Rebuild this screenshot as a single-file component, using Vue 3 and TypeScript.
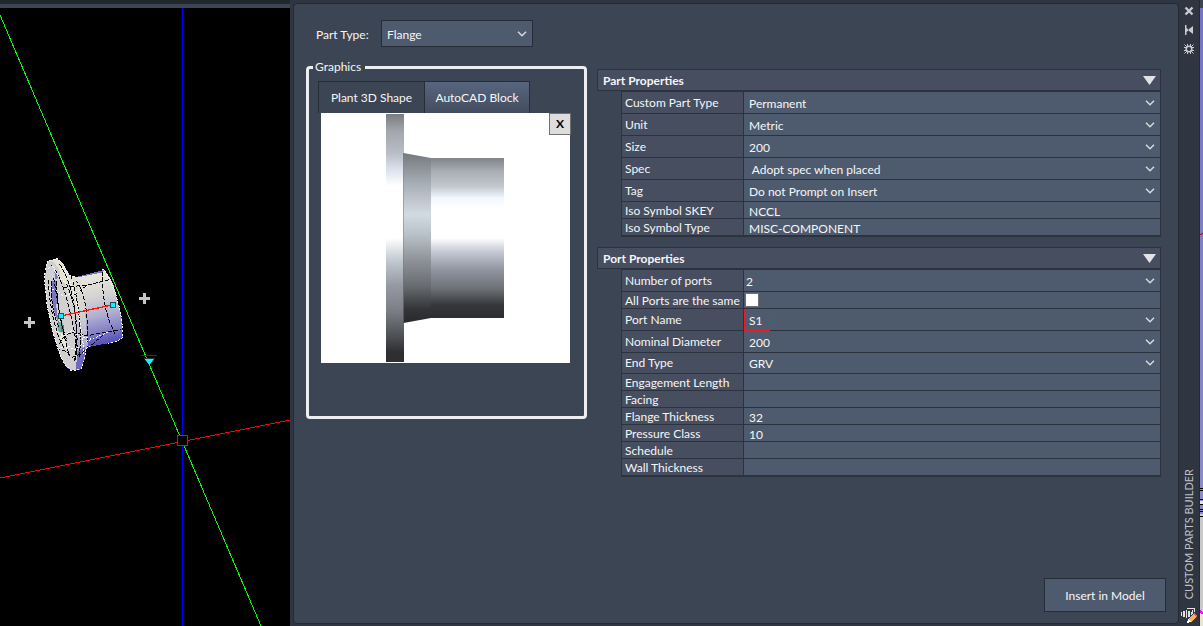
<script setup lang="ts">
import { reactive, ref } from 'vue'

type Kind = 'select' | 'text' | 'check'

interface Property {
  id: string
  label: string
  kind: Kind
  value: string
  size?: 'mid' | 'small'
  tight?: boolean
  marked?: boolean
}

interface Section {
  title: string
  open: boolean
  rows: Property[]
}

const sections = reactive<Section[]>([
  {
    title: 'Part Properties',
    open: true,
    rows: [
      { id: 'custom-type', label: 'Custom Part Type', kind: 'select', value: 'Permanent' },
      { id: 'unit', label: 'Unit', kind: 'select', value: 'Metric' },
      { id: 'size', label: 'Size', kind: 'select', value: '200' },
      { id: 'spec', label: 'Spec', kind: 'select', value: '\u00a0Adopt spec when placed' },
      { id: 'tag', label: 'Tag', kind: 'select', value: 'Do not Prompt on Insert' },
      { id: 'skey', label: 'Iso Symbol SKEY', kind: 'text', value: 'NCCL', size: 'small' },
      { id: 'iso-type', label: 'Iso Symbol Type', kind: 'text', value: 'MISC-COMPONENT', size: 'small' },
    ],
  },
  {
    title: 'Port Properties',
    open: true,
    rows: [
      { id: 'ports', label: 'Number of ports', kind: 'select', value: '2', tight: true },
      { id: 'same', label: 'All Ports are the same', kind: 'check', value: '', size: 'small' },
      { id: 'port-name', label: 'Port Name', kind: 'select', value: 'S1', marked: true },
      { id: 'diameter', label: 'Nominal Diameter', kind: 'select', value: '200' },
      { id: 'end-type', label: 'End Type', kind: 'select', value: 'GRV', size: 'mid' },
      { id: 'engagement', label: 'Engagement Length', kind: 'text', value: '', size: 'small' },
      { id: 'facing', label: 'Facing', kind: 'text', value: '', size: 'small' },
      { id: 'thickness', label: 'Flange Thickness', kind: 'text', value: '32', size: 'small' },
      { id: 'pressure', label: 'Pressure Class', kind: 'text', value: '10', size: 'small' },
      { id: 'schedule', label: 'Schedule', kind: 'text', value: '', size: 'small' },
      { id: 'wall', label: 'Wall Thickness', kind: 'text', value: '', size: 'small' },
    ],
  },
])

const tabs = ['Plant 3D Shape', 'AutoCAD Block']
const activeTab = ref('AutoCAD Block')
const partType = ref('Flange')
const allSame = ref(false)
</script>

<template>
  <div class="app">
    <section class="viewport" aria-label="Model view">
      <svg class="scene" viewBox="0 8 290 618" preserveAspectRatio="xMinYMin slice">
        <defs>
          <linearGradient id="body" x1="0" y1="0" x2="0.15" y2="1">
            <stop offset="0" stop-color="#dedfdb" />
            <stop offset="0.1" stop-color="#e9e8da" />
            <stop offset="0.4" stop-color="#d5d4d2" />
            <stop offset="0.65" stop-color="#b0afd0" />
            <stop offset="0.85" stop-color="#8582c6" />
            <stop offset="1" stop-color="#5a55c0" />
          </linearGradient>
          <linearGradient id="rim" x1="0" y1="0" x2="0" y2="1">
            <stop offset="0" stop-color="#e6e5d4" />
            <stop offset="0.5" stop-color="#d2d2d2" />
            <stop offset="0.8" stop-color="#a9a8cd" />
            <stop offset="1" stop-color="#615dbb" />
          </linearGradient>
        </defs>
        <line x1="182.500" y1="8" x2="182.500" y2="626" stroke="#0000ff" />
        <g transform="translate(35 250) scale(0.333333)" shape-rendering="crispEdges">
          <path d="M122 81L208 60L218 72L236 105L248 155L260 205L263 262L250 274L160 291L120 250Z" fill="url(#body)" />
          <path d="M126 80L206 60L204 67L140 80Z" fill="#7773c4" />
          <path d="M38 32L68 27L84 40L104 76L122 80L140 92L150 150L152 215L160 285L151 300L150 320L138 358L108 362L94 350L74 314L52 240L36 165L30 90Z" fill="url(#rim)" />
          <path d="M32 60L38 32L55 34L72 58L90 105L106 170L120 245L127 320L124 358L108 362L92 348L74 314L52 240L36 165L30 105Z" fill="#d0d0d0" />
          <path d="M128 305L151 290L150 325L138 357L122 360Z" fill="#6c69bf" />
          <path d="M50 94L63 94L66 140L64 172L72 222L60 195L51 145Z" fill="#7976be" />
          <path d="M58 65L65 66L70 82L62 90Z" fill="#7976be" />
          <path d="M78 245L92 268L103 314L94 300L76 265Z" fill="#e8e6cf" />
          <path d="M76 48L88 55L98 85L94 108L76 80Z" fill="#e8e6cf" />
          <ellipse cx="77" cy="231" rx="10" ry="15" fill="#64ad9f" />
          <path d="M78 222L88 226L86 244L79 246Z" fill="#308d8c" />
          <g fill="none" stroke="#000" stroke-width="3" stroke-dasharray="13 5">
            <path d="M40 90C42 160 60 250 90 300" />
            <path d="M48 46C70 62 90 120 108 198S126 305 118 334" />
            <path d="M56 84C66 142 75 216 103 319" />
            <path d="M50 94C47 145 54 200 72 230M63 94L70 168L82 232L96 272" />
            <path d="M73 42C98 75 117 137 122 208S130 322 116 337" />
            <path d="M94 100C117 152 130 216 125 302" />
            <path d="M108 76C128 142 142 230 133 322" />
            <path d="M122 90C148 120 160 190 158 278" />
            <path d="M204 65C199 112 208 174 225 218L240 252" />
            <path d="M86 112L157 105L246 84M116 136L157 105" />
            <path d="M74 282C90 240 122 245 150 258L258 239" />
            <path d="M63 295L92 304L112 322L138 312L169 285L211 250" />
          </g>
          <g fill="none" stroke="#fff" stroke-width="3" stroke-dasharray="6 5">
            <path d="M32 60L38 32L68 26L85 44L101 76L122 80" />
            <path d="M30 68L30 105L36 165L52 240L74 314L92 348L108 362L138 358L150 322L151 296L165 290" />
            <path d="M201 60L210 60L222 84L242 132L256 183L263 238L262 263L249 273L218 280" />
            <path d="M40 55L53 50L67 76L94 101L127 91" />
            <path d="M30 115L61 118L83 137L116 133L156 110" />
            <path d="M60 242L86 259L110 242L135 260L169 265" />
            <path d="M69 299L95 286L119 300L150 276L225 244" />
            <path d="M85 52L112 113L129 181L143 267L146 313" />
          </g>
          <path d="M78 198L235 164" stroke="#ff1010" stroke-width="4" />
          <g fill="#00f5ff" stroke="#244c50" stroke-width="3">
            <rect x="71" y="191" width="15" height="15" />
            <rect x="227" y="157" width="15" height="15" />
          </g>
        </g>
        <path d="M0 15L261 626" stroke="#00ff00" fill="none" shape-rendering="crispEdges" />
        <path d="M0 478L290 420" stroke="#ff0000" fill="none" shape-rendering="crispEdges" />
        <path
          d="M28 317h3v4h4v3h-4v4h-3v-4h-4v-3h4zM143 293h3v4h4v3h-4v4h-3v-4h-4v-3h4z"
          fill="#c6c6c6"
        />
        <path d="M141 355.500h16M144 358.500h11" stroke="#333" />
        <path d="M144.500 359h9.500l-4.500 6z" fill="#00ffff" />
        <rect x="177.500" y="435.500" width="10" height="10" fill="#000" stroke="#ff0000" />
      </svg>
    </section>

    <main class="palette">
      <div class="sheet">
        <div class="type-line">
          <label for="part-type">Part Type:</label>
          <span class="pick type-pick">
            <select id="part-type" v-model="partType">
              <option>Flange</option>
            </select>
            <svg class="chevron" viewBox="0 0 10 6"><path d="M1 0.800L5 4.800L9 0.800" /></svg>
          </span>
        </div>

        <div class="columns">
          <fieldset class="graphics">
            <legend>Graphics</legend>
            <div class="tabs" role="tablist">
              <button
                v-for="tab in tabs"
                :key="tab"
                type="button"
                role="tab"
                class="tab"
                :class="{ active: tab === activeTab }"
                :aria-selected="tab === activeTab"
                @click="activeTab = tab"
              >{{ tab }}</button>
            </div>
            <div class="preview">
              <svg class="drawing" viewBox="0 0 250 250" preserveAspectRatio="xMinYMin slice" role="img" aria-label="Flange">
                <defs>
                  <linearGradient id="plate" x1="0" y1="0" x2="0" y2="1">
                    <stop offset="0" stop-color="#797c81" />
                    <stop offset="0.070" stop-color="#a3a7ac" />
                    <stop offset="0.160" stop-color="#b9bec7" />
                    <stop offset="0.230" stop-color="#e0e4ef" />
                    <stop offset="0.290" stop-color="#ffffff" />
                    <stop offset="0.500" stop-color="#ffffff" />
                    <stop offset="0.590" stop-color="#c2c9d1" />
                    <stop offset="0.690" stop-color="#9699a2" />
                    <stop offset="0.790" stop-color="#7c8086" />
                    <stop offset="0.900" stop-color="#4c4e51" />
                    <stop offset="0.960" stop-color="#2e2f32" />
                    <stop offset="1" stop-color="#2e2f32" />
                  </linearGradient>
                  <linearGradient id="pipe" x1="0" y1="0" x2="0" y2="1">
                    <stop offset="0" stop-color="#818488" />
                    <stop offset="0.080" stop-color="#a8acb3" />
                    <stop offset="0.180" stop-color="#c3c8d0" />
                    <stop offset="0.250" stop-color="#f0f8fe" />
                    <stop offset="0.320" stop-color="#ffffff" />
                    <stop offset="0.500" stop-color="#ffffff" />
                    <stop offset="0.580" stop-color="#c8ccd6" />
                    <stop offset="0.700" stop-color="#9094a0" />
                    <stop offset="0.820" stop-color="#6c6f74" />
                    <stop offset="0.920" stop-color="#35373a" />
                    <stop offset="1" stop-color="#2c2d31" />
                  </linearGradient>
                  <linearGradient id="neck" x1="0" y1="0" x2="0" y2="1">
                    <stop offset="0" stop-color="#74797e" />
                    <stop offset="0.160" stop-color="#a2a8af" />
                    <stop offset="0.360" stop-color="#d3dbe2" />
                    <stop offset="0.480" stop-color="#b9c1c8" />
                    <stop offset="0.640" stop-color="#8c9096" />
                    <stop offset="0.780" stop-color="#696c70" />
                    <stop offset="0.920" stop-color="#323437" />
                    <stop offset="1" stop-color="#29292e" />
                  </linearGradient>
                </defs>
                <rect x="65" y="1" width="18" height="248" fill="url(#plate)" />
                <path d="M110 45H183V205H110Z" fill="url(#pipe)" />
                <path d="M82.500 40L110 45V205L82.500 210Z" fill="url(#neck)" />
                <path d="M82.500 40V210" stroke="#5b5e62" stroke-opacity="0.500" />
              </svg>
              <button type="button" class="clear">X</button>
            </div>
          </fieldset>

          <div class="properties">
            <section v-for="section in sections" :key="section.title" class="section">
              <button
                type="button"
                class="section-head"
                :aria-expanded="section.open"
                @click="section.open = !section.open"
              >
                <span>{{ section.title }}</span>
                <svg class="arrow" viewBox="0 0 13 9"><path d="M0 0H13L6.500 9Z" /></svg>
              </button>
              <table v-if="section.open" class="grid">
                <tbody>
                  <tr v-for="row in section.rows" :key="row.id" :class="row.size">
                    <th scope="row"><label :for="row.id">{{ row.label }}</label></th>
                    <td>
                      <span v-if="row.kind === 'select'" class="pick" :class="{ tight: row.tight }">
                        <select :id="row.id" v-model="row.value">
                          <option :value="row.value">{{ row.value }}</option>
                        </select>
                        <svg class="chevron" viewBox="0 0 10 6"><path d="M1 0.800L5 4.800L9 0.800" /></svg>
                      </span>
                      <input v-else-if="row.kind === 'check'" :id="row.id" v-model="allSame" type="checkbox" class="check" />
                      <input v-else :id="row.id" v-model="row.value" type="text" class="field" />
                      <span v-if="row.marked" class="mark"></span>
                    </td>
                  </tr>
                </tbody>
              </table>
            </section>
          </div>
        </div>

        <div class="actions">
          <button type="button" class="insert">Insert in Model</button>
        </div>
      </div>
    </main>

    <aside class="rail">
      <button type="button" class="tool" aria-label="Close">
        <svg viewBox="0 0 10 10"><path d="M1.500 1.500L8.500 8.500M8.500 1.500L1.500 8.500" stroke="#c8cbd0" stroke-width="2.400" /></svg>
      </button>
      <button type="button" class="tool" aria-label="Auto-hide">
        <svg viewBox="0 0 10 10"><path d="M1 0H2.500V3L5 5L2.500 7V10H1ZM9 1V9L5 6V4Z" fill="#c8cbd0" /></svg>
      </button>
      <button type="button" class="tool" aria-label="Properties">
        <svg viewBox="0 0 10 10">
          <circle cx="5" cy="5" r="2.800" fill="none" stroke="#c8cbd0" stroke-width="1.600" />
          <path
            d="M3.500 0V2.500M6.500 0V2.500M3.500 7.500V10M6.500 7.500V10M0 3.500H2.500M0 6.500H2.500M7.500 3.500H10M7.500 6.500H10M0.500 0.500L3 3M9.500 0.500L7 3M0.500 9.500L3 7M9.500 9.500L7 7"
            stroke="#c8cbd0"
          />
        </svg>
      </button>
      <span class="rail-title">CUSTOM PARTS BUILDER</span>
      <svg class="rail-logo" viewBox="0 0 16 16" shape-rendering="crispEdges">
        <path d="M0 4H1V8H0ZM2 3H4V9H2ZM5 2H6V10H5ZM7 3H9V9H7ZM10 4H11V7H10ZM6 0H14V1H6ZM13 1H14V4H13ZM11 2H12V6H11Z" fill="#e2e2e2" />
        <path d="M7 11L12 6L15 9L10 14Z" fill="#f3b35d" />
        <path d="M12 6L13 5L16 8L15 9Z" fill="#e65c51" />
        <path d="M7 11L10 14L6 15Z" fill="#ffffff" />
      </svg>
    </aside>

    <svg class="edge" aria-hidden="true" shape-rendering="crispEdges">
      <defs>
        <linearGradient id="sky" x1="0" y1="0" x2="0" y2="1">
          <stop offset="0" stop-color="#7473c8" />
          <stop offset="1" stop-color="#8b89c9" />
        </linearGradient>
      </defs>
      <rect y="0" width="3" height="8" fill="#3c4453" />
      <rect y="8" width="3" height="480" fill="url(#sky)" />
      <path d="M0 234.500H1V233.500H3" stroke="#ff0000" fill="none" />
      <rect y="488" width="3" height="138" fill="#c9c9ca" />
      <rect y="488" width="3" height="26" fill="#8b89c9" />
      <rect y="501" width="3" height="3" fill="#e8e6cf" />
      <path d="M0 488.500H3M0 490.500H3M0 499.500H3M0 504.500H3M0 509.500H3M0 511.500H3M0 516.500H3" stroke="#000" />
      <rect y="612" width="3" height="14" fill="#e8e6cf" />
      <path d="M0 611L3 614" stroke="#ff00ff" stroke-width="2" />
    </svg>
  </div>
</template>

<style>
html,
body {
  background: #2f3541;
}
</style>

<style scoped>
.app {
  --text: #f5f6f7;
  --line: #2c323e;
  --cell: #4e5b6e;
  --sheet: #3c4553;
  display: flex;
  min-height: 100vh;
  background: #2f3541;
  color: var(--text);
  font: 12px/16px Lato, "Open Sans", sans-serif;
}

*,
*::before,
*::after {
  box-sizing: border-box;
}

button,
select,
input {
  margin: 0;
  font: inherit;
  color: inherit;
  border-radius: 0;
}

.viewport {
  display: flex;
  flex: 0 0 290px;
  border-top: 4px solid #22272e;
  background: #000;
}

.scene {
  flex: 1;
  width: 100%;
  height: calc(100vh - 4px);
  border-top: 4px solid var(--sheet);
}

.palette {
  display: flex;
  flex: 1;
  min-width: 0;
  padding: 3px 0 2px 3px;
  background: #2f3541;
}

.sheet {
  display: flex;
  flex: 1;
  flex-direction: column;
  min-width: 0;
  padding: 16px 17px 11px 12px;
  border: 1px solid #242932;
  border-radius: 4px;
  background: var(--sheet);
}

.type-line {
  display: flex;
  align-items: center;
  padding-left: 10px;
}

.type-line label {
  flex: 0 0 65px;
  padding-top: 2px;
}

.pick {
  display: grid;
  grid-template-columns: 1fr 20px;
  align-items: center;
  height: 100%;
}

.pick select {
  grid-area: 1 / 1 / 2 / 3;
  width: 100%;
  height: 100%;
  padding: 2px 20px 0 5px;
  border: 0;
  background: transparent;
  appearance: none;
}

.pick.tight select {
  padding-left: 2px;
}

.pick option {
  background: #4e5b6e;
}

.chevron {
  grid-area: 1 / 2;
  justify-self: center;
  width: 10px;
  height: 6px;
  pointer-events: none;
}

.chevron path {
  fill: none;
  stroke: #d7dade;
  stroke-width: 1.5px;
}

.type-pick {
  width: 152px;
  height: 27px;
  border: 1px solid #262c37;
  background: var(--cell);
}

.columns {
  display: flex;
  align-items: flex-start;
  gap: 10px;
  padding-top: 12px;
}

.graphics {
  flex: 0 0 281px;
  min-width: 0;
  height: 360px;
  margin: 0;
  padding: 6px 9px 0;
  border: 3px solid #eceef1;
  border-radius: 4px;
}

.graphics legend {
  margin-left: -5px;
  padding: 0 4px 0 2px;
}

.tabs {
  display: flex;
}

.tab {
  width: 107px;
  height: 32px;
  padding: 0;
  border: 1px solid #272d38;
  border-bottom: 0;
  background: var(--sheet);
}

.tab + .tab {
  width: 105px;
  border-left: 0;
}

.tab.active {
  background: linear-gradient(#58657f, #434d60);
}

.preview {
  position: relative;
  width: 249px;
  height: 250px;
  margin-left: 3px;
  background: #fff;
}

.drawing {
  display: block;
  width: 100%;
  height: 100%;
}

.clear {
  position: absolute;
  top: 0;
  right: -1px;
  width: 22px;
  height: 22px;
  padding: 0;
  border: 1px solid #707070;
  background: #ddd;
  color: #000;
  font-weight: 700;
}

.properties {
  display: flex;
  flex: 1;
  flex-direction: column;
  gap: 10px;
  min-width: 0;
  padding-top: 10px;
}

.section-head {
  display: flex;
  align-items: center;
  justify-content: space-between;
  width: 100%;
  height: 22px;
  padding: 0 4px 0 5px;
  border: 1px solid var(--line);
  background: #474e60;
  font-weight: 700;
}

.section-head span {
  padding-top: 2px;
}

.arrow {
  width: 13px;
  height: 9px;
  fill: #e2e3e5;
}

.grid {
  width: calc(100% - 24px);
  margin-left: 24px;
  border: 1px solid var(--line);
  border-spacing: 0;
  table-layout: fixed;
}

.grid th,
.grid td {
  height: 22px;
  padding: 0;
  border-bottom: 1px solid var(--line);
  line-height: 16px;
}

.grid th {
  width: 122px;
  padding-left: 3px;
  border-right: 1px solid var(--line);
  background: #474e60;
  font-weight: 400;
  text-align: left;
  white-space: nowrap;
}

.grid td {
  position: relative;
  background: var(--cell);
}

.grid .mid th,
.grid .mid td {
  height: 21px;
}

.grid .small th,
.grid .small td {
  height: 17px;
}

.grid label {
  display: block;
}

.grid .small label {
  padding-top: 2px;
  line-height: 14px;
}

.grid .pick {
  height: 20px;
}

.field {
  display: block;
  width: 100%;
  height: 16px;
  padding: 2px 5px 0;
  border: 0;
  background: transparent;
  line-height: 14px;
}

.check {
  display: block;
  width: 14px;
  height: 14px;
  margin-left: 1px;
  border: 1px solid #707070;
  background: #fff;
  appearance: none;
}

.check:checked {
  background: #3a6fb5;
}

.mark {
  position: absolute;
  z-index: 1;
  top: 0;
  left: 0;
  display: block;
  width: 26px;
  height: 22px;
  border: 1px solid #ed1c24;
  pointer-events: none;
}

.actions {
  display: flex;
  justify-content: flex-end;
  margin-top: auto;
  margin-right: -5px;
}

.insert {
  width: 122px;
  height: 34px;
  padding: 2px 0 0;
  border: 1px solid #272d38;
  background: var(--cell);
}

.rail {
  display: flex;
  flex: 0 0 21px;
  flex-direction: column;
  align-items: center;
  gap: 9px;
  padding: 6px 0 2px;
  border-right: 1px solid #242932;
  background: #2f3541;
}

.tool {
  width: 10px;
  height: 10px;
  padding: 0;
  border: 0;
  background: transparent;
}

.tool svg {
  display: block;
}

.rail-title {
  margin-top: auto;
  color: #bfc2c7;
  font-size: 11px;
  white-space: nowrap;
  writing-mode: vertical-rl;
  transform: rotate(180deg);
}

.rail-logo {
  width: 16px;
  height: 16px;
}

.edge {
  flex: 0 0 3px;
  width: 3px;
  height: 100vh;
}
</style>
